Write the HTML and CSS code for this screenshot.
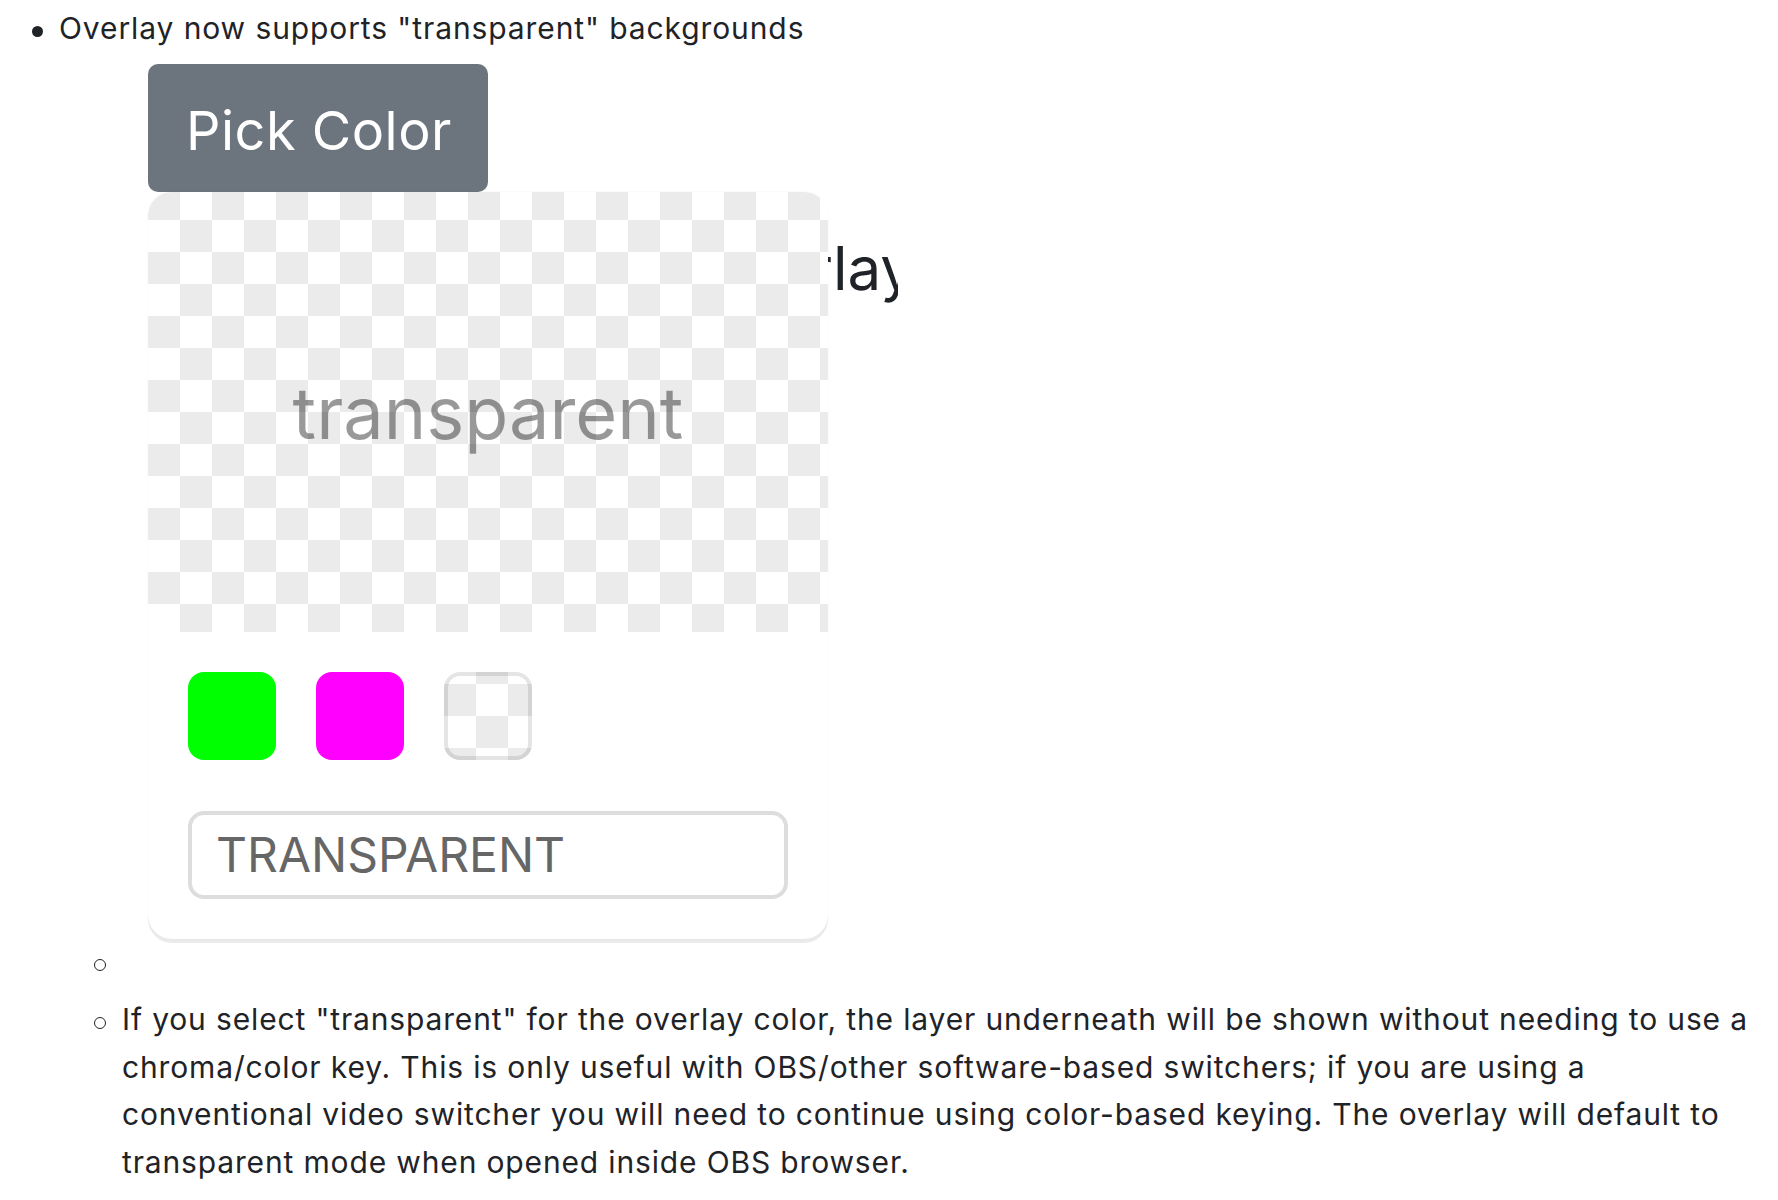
FILE: index.html
```html
<!DOCTYPE html>
<html lang="en">
<head>
<meta charset="utf-8">
<title>Overlay transparent backgrounds</title>
<link rel="stylesheet" href="styles.css">
</head>
<body>
<ul class="list">
  <li class="item">Overlay now supports "transparent" backgrounds
    <div class="demo">
      <div class="backdrop"><span class="backdrop-text">Overlay</span></div>
      <button class="pick" type="button">Pick Color</button>
      <div class="picker">
        <div class="picker-head checker"><span class="picker-label">transparent</span></div>
        <div class="picker-body">
          <div class="swatches">
            <span class="swatch swatch-green"></span>
            <span class="swatch swatch-magenta"></span>
            <span class="swatch swatch-clear checker"></span>
          </div>
          <input class="hex-input" type="text" value="TRANSPARENT">
        </div>
      </div>
    </div>
    <ul class="sub">
      <li class="sub-item"></li>
      <li class="sub-item">If you select "transparent" for the overlay color, the layer underneath will be shown without needing to use a chroma/color key. This is only useful with OBS/other software-based switchers; if you are using a conventional video switcher you will need to continue using color-based keying. The overlay will default to transparent mode when opened inside OBS browser.</li>
    </ul>
  </li>
</ul>
</body>
</html>
```

FILE: styles.css
```css
html, body {
  margin: 0;
  padding: 0;
  background: #ffffff;
}

body {
  font-family: Inter, "Noto Sans", "Liberation Sans", sans-serif;
  font-size: 30px;
  line-height: 47.6px;
  letter-spacing: 0.9px;
  color: #1f2328;
}

.list {
  margin: 0;
  padding: 5px 0 0 59px;
  list-style: none;
}

.item,
.sub-item {
  position: relative;
}

.item::before {
  content: "";
  position: absolute;
  left: -27px;
  top: 20.5px;
  width: 11px;
  height: 11px;
  border-radius: 50%;
  background: #1f2328;
}

.sub-item::before {
  content: "";
  position: absolute;
  left: -28px;
  top: 20.5px;
  width: 10px;
  height: 10px;
  border-radius: 50%;
  border: 1.5px solid #1f2328;
}

.demo {
  position: relative;
  margin: 11px 0 0 89px;
  width: 680px;
}

.backdrop {
  position: absolute;
  left: 452px;
  top: 154px;
  width: 298px;
  height: 130px;
  overflow: hidden;
}

.backdrop-text {
  position: absolute;
  right: -16px;
  top: 0;
  font-size: 60px;
  line-height: 100px;
  letter-spacing: 0;
  white-space: nowrap;
  color: #1f2328;
}

.pick {
  position: relative;
  display: block;
  box-sizing: border-box;
  width: 340px;
  height: 128px;
  margin: 0;
  padding: 5px 0 0 38px;
  text-align: left;
  border: 0;
  border-radius: 10px;
  background: #6c757d;
  color: #ffffff;
  font-family: Inter, "Liberation Sans", sans-serif;
  font-size: 54px;
  line-height: 123px;
  letter-spacing: 0.5px;
}

.picker {
  position: relative;
  width: 680px;
  background: #ffffff;
  border-radius: 24px;
  box-shadow: 0 4px 0 rgba(0, 0, 0, 0.08), 0 0 0 1px rgba(0, 0, 0, 0.015);
}

.checker {
  background: repeating-conic-gradient(#ffffff 0 25%, #ebebeb 0 50%) left center / 64px 64px;
}

.picker-head {
  height: 440px;
  border-radius: 24px 24px 0 0;
  display: flex;
  align-items: center;
  justify-content: center;
}

.picker-label {
  font-size: 72px;
  line-height: 1;
  letter-spacing: 0;
  color: rgba(0, 0, 0, 0.4);
  margin-top: 2px;
}

.picker-body {
  padding: 40px;
}

.swatches {
  display: flex;
  gap: 40px;
}

.swatch {
  display: block;
  width: 88px;
  height: 88px;
  border-radius: 16px;
}

.swatch-green {
  background: #00ff00;
}

.swatch-magenta {
  background: #ff00ff;
}

.swatch-clear {
  box-shadow: inset 0 0 0 4px rgba(0, 0, 0, 0.1);
}

.hex-input {
  display: block;
  box-sizing: border-box;
  width: 100%;
  height: 88px;
  margin-top: 51px;
  padding: 0 28px;
  border: 0;
  outline: none;
  border-radius: 16px;
  box-shadow: inset 0 0 0 4px #dddddd;
  background: #ffffff;
  font-family: Inter, "Liberation Sans", sans-serif;
  font-size: 48px;
  letter-spacing: 0;
  color: #666666;
}

.sub {
  margin: 0;
  padding: 0 0 0 63px;
  list-style: none;
  width: 1632px;
  letter-spacing: 0.85px;
}

.sub-item {
  min-height: 47.6px;
}

.sub-item + .sub-item {
  margin-top: 10px;
}
```
